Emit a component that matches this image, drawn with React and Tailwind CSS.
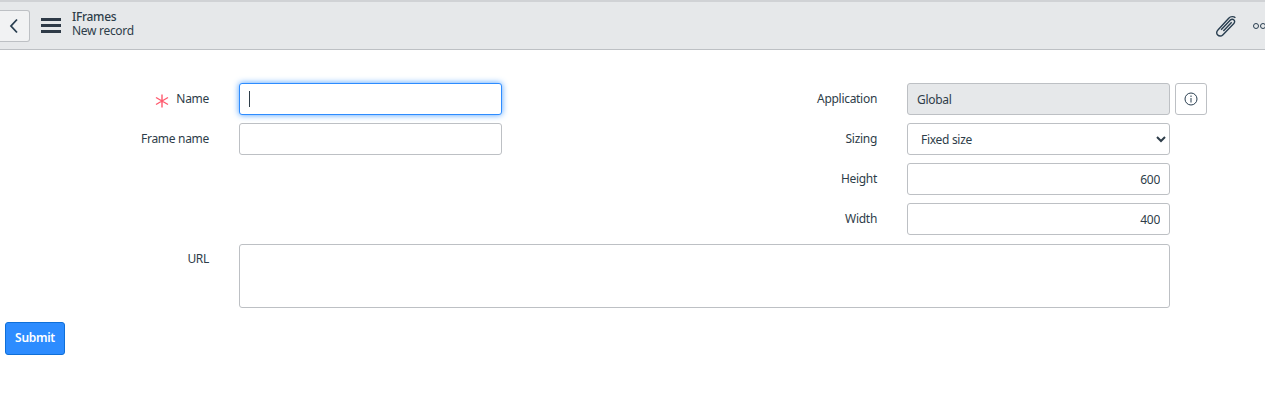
import React from 'react';

const font = { fontFamily: '"Noto Sans", sans-serif' };

function Label({ children, required, url }) {
  return (
    <div className={'flex h-8 w-full items-start justify-end text-[12px] leading-[20px] tracking-[-0.3px] text-[#2e3d49] ' + (url ? 'pt-[5px]' : 'pt-[6px]')}>
      {required && (
        <svg className="mr-[7px] mt-[5px] h-[14px] w-[14px]" viewBox="0 0 14 14" fill="none" stroke="#ff5a6e" strokeWidth="1.4">
          <path d="M7 0.5V13.5M1 3.5L13 10.5M13 3.5L1 10.5" />
        </svg>
      )}
      <span>{children}</span>
    </div>
  );
}

const inputBase =
  'block h-8 w-[263px] rounded-[3px] border px-[9px] text-[12px] tracking-[-0.3px] text-[#2e3d49] outline-none';
const inputClass = inputBase + ' border-[#bdc0c4] bg-white';

export default function App() {
  return (
    <div className="h-[420px] overflow-hidden bg-white" style={font}>
      {/* header */}
      <div className="flex h-[50px] items-center border-t-2 border-b border-t-[#d0d2d5] border-b-[#bdc0c4] bg-[#e6e8ea]">
        <button className="flex h-8 w-[30px] items-center justify-center rounded-r-[3px] border border-l-0 border-[#bdc0c4] bg-[#f1f2f3] pr-[1px] text-[#293e50]">
          <svg width="10" height="16" viewBox="0 0 10 16" fill="none" stroke="currentColor" strokeWidth="1.8">
            <path d="M8 1.5L2 8L8 14.5" />
          </svg>
        </button>
        <div className="ml-[11px] flex w-5 flex-col gap-[3px]">
          <div className="h-[3px] bg-[#2e3a47]" />
          <div className="h-[3px] bg-[#2e3a47]" />
          <div className="h-[3px] bg-[#2e3a47]" />
        </div>
        <div className="ml-[11px] -mt-[3px] text-[12px] leading-[14px] tracking-[-0.3px] text-[#2e3d49]">
          <div className="font-medium">IFrames</div>
          <div>New record</div>
        </div>
        <div className="ml-auto flex items-center">
          <svg className="mr-[15px]" width="24" height="24" viewBox="0 0 22 22" fill="none" stroke="#293e50" strokeWidth="1.3">
            <path d="M6.5 14.5L15 5.5C16 4.4 17.5 4.6 18.3 5.4C19.1 6.2 19.2 7.6 18.2 8.6L8 19.2C6.7 20.6 4.6 20.5 3.4 19.3C2.2 18.1 2.1 16.1 3.4 14.8L13.5 3.8C15.2 2 18 1.9 19.6 3.5" />
            <path d="M8.6 15.6L16.2 7.6" />
          </svg>
          <div className="-mr-[8px] flex shrink-0 gap-[1px]">
            <span className="h-[6px] w-[6px] rounded-full border border-[#293e50]" />
            <span className="h-[6px] w-[6px] rounded-full border border-[#293e50]" />
            <span className="h-[6px] w-[6px] rounded-full border border-[#293e50]" />
          </div>
        </div>
      </div>

      {/* form */}
      <div className="pt-[33px]">
        <div className="flex">
          <div className="grid w-[502px] grid-cols-[209px_263px] content-start gap-x-[30px] gap-y-2">
            <Label required>Name</Label>
            <div className="relative">
              <input className={inputBase + ' border-[#2d8cff] bg-white caret-transparent shadow-[0_0_6px_#4f9fff]'} />
              <div className="absolute left-[10px] top-[8px] h-[16px] w-px bg-[#2e3d49]" />
            </div>
            <Label>Frame name</Label>
            <input className={inputClass} />
          </div>
          <div className="grid w-[705px] grid-cols-[405px_263px_37px] gap-y-2">
            <div className="pr-[30px]"><Label>Application</Label></div>
            <input className={inputBase + ' border-[#bdc0c4] bg-[#e6e8ea]'} value="Global" readOnly />
            <button className="ml-[5px] flex h-8 w-8 items-center justify-center rounded-[3px] border border-[#bdc0c4] bg-white">
              <svg width="14" height="14" viewBox="0 0 14 14" fill="none" stroke="#293e50" strokeWidth="1">
                <circle cx="7" cy="7" r="6" />
                <path d="M7 6V10.5M7 3.5V5" />
              </svg>
            </button>
            <div className="pr-[30px]"><Label>Sizing</Label></div>
            <select className={inputClass} defaultValue="Fixed size">
              <option>Fixed size</option>
            </select>
            <div />
            <div className="pr-[30px]"><Label>Height</Label></div>
            <input className={inputClass + ' text-right'} value="600" readOnly />
            <div />
            <div className="pr-[30px]"><Label>Width</Label></div>
            <input className={inputClass + ' text-right'} value="400" readOnly />
            <div />
          </div>
        </div>
        <div className="mt-[9px] grid grid-cols-[209px_931px] gap-x-[30px]">
          <Label url>URL</Label>
          <textarea className="block h-16 w-full resize-none rounded-[3px] border border-[#bdc0c4] bg-white outline-none" />
        </div>
        <button className="ml-[5px] mt-[14px] h-[33px] w-[60px] rounded-[3px] border border-[#0f6fd8] bg-[#2d8cff] pb-[2px] text-[12px] font-semibold tracking-[-0.3px] text-white">
          Submit
        </button>
      </div>
    </div>
  );
}
